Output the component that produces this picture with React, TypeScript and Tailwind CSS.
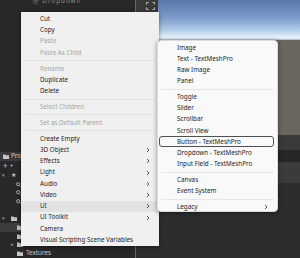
import React from 'react';

type Item = { label: string; disabled?: boolean; sub?: boolean; active?: boolean; outlined?: boolean } | 'sep';

const MAIN_ITEMS: Item[] = [
  { label: 'Cut' },
  { label: 'Copy' },
  { label: 'Paste', disabled: true },
  { label: 'Paste As Child', disabled: true },
  'sep',
  { label: 'Rename', disabled: true },
  { label: 'Duplicate' },
  { label: 'Delete' },
  'sep',
  { label: 'Select Children', disabled: true },
  'sep',
  { label: 'Set as Default Parent', disabled: true },
  'sep',
  { label: 'Create Empty' },
  { label: '3D Object', sub: true },
  { label: 'Effects', sub: true },
  { label: 'Light', sub: true },
  { label: 'Audio', sub: true },
  { label: 'Video', sub: true },
  { label: 'UI', sub: true, active: true },
  { label: 'UI Toolkit', sub: true },
  { label: 'Camera' },
  { label: 'Visual Scripting Scene Variables' },
];

const UI_ITEMS: Item[] = [
  { label: 'Image' },
  { label: 'Text - TextMeshPro' },
  { label: 'Raw Image' },
  { label: 'Panel' },
  'sep',
  { label: 'Toggle' },
  { label: 'Slider' },
  { label: 'Scrollbar' },
  { label: 'Scroll View' },
  { label: 'Button - TextMeshPro', outlined: true },
  { label: 'Dropdown - TextMeshPro' },
  { label: 'Input Field - TextMeshPro' },
  'sep',
  { label: 'Canvas' },
  { label: 'Event System' },
  'sep',
  { label: 'Legacy', sub: true },
];

function Chevron() {
  return (
    <svg width="4" height="6" viewBox="0 0 4 6" className="shrink-0">
      <path d="M1 1 L3 3 L1 5" fill="none" stroke="#4a4a4a" strokeWidth="0.9" />
    </svg>
  );
}

function Folder() {
  return (
    <svg width="6" height="5" viewBox="0 0 6 5" className="shrink-0">
      <path d="M0 0.5 H2.3 L3 1.2 H6 V5 H0 Z" fill="#c4c4c4" />
    </svg>
  );
}

function Lens() {
  return (
    <svg width="5" height="5" viewBox="0 0 5 5" className="shrink-0">
      <circle cx="2.2" cy="2.2" r="1.6" fill="none" stroke="#bdbdbd" strokeWidth="0.9" />
      <path d="M3.4 3.4 L4.7 4.7" stroke="#bdbdbd" strokeWidth="0.9" />
    </svg>
  );
}

function MainMenu() {
  return (
    <div className="absolute left-[21px] top-[12px] w-[138px] h-[234px] bg-[#f0f0f0] pt-[1.5px] shadow-[0_1px_4px_rgba(0,0,0,0.45)]">
      {MAIN_ITEMS.map((it, i) =>
        it === 'sep' ? (
          <div key={i} className="h-[4.6px] flex items-center px-[4px]">
            <div className="h-px w-full bg-[#e2e2e2]" />
          </div>
        ) : (
          <div
            key={i}
            className={`h-[11.25px] flex items-center justify-between pl-[19px] pr-[9px] ${
              it.active ? 'bg-[#e2e2e2]' : ''
            }`}
          >
            <span
              className={`text-[6.3px] leading-none whitespace-nowrap ${
                it.disabled ? 'text-[#a6a6a6]' : 'text-[#1e1e1e]'
              }`}
            >
              {it.label}
            </span>
            {it.sub && <Chevron />}
          </div>
        ),
      )}
    </div>
  );
}

function UiMenu() {
  return (
    <div className="absolute left-[157px] top-[40px] w-[121px] h-[172px] bg-[#f9f9f9] rounded-[4px] pt-[1.5px] border border-[#dcdcdc] shadow-[0_1px_5px_rgba(0,0,0,0.4)]">
      {UI_ITEMS.map((it, i) =>
        it === 'sep' ? (
          <div key={i} className="h-[5px] flex items-center px-[3px]">
            <div className="h-px w-full bg-[#e6e6e6]" />
          </div>
        ) : (
          <div key={i} className="h-[11.1px] pl-[1px] pr-[3px]">
            <div
              className={`h-full flex items-center justify-between pl-[17px] pr-[5px] rounded-[3px] ${
                it.outlined ? 'border border-[#505050]' : 'border border-transparent'
              }`}
            >
              <span className="text-[6.3px] leading-none whitespace-nowrap text-[#1e1e1e]">{it.label}</span>
              {it.sub && <Chevron />}
            </div>
          </div>
        ),
      )}
    </div>
  );
}

// tree rows sit mostly under the menu, only icons at the left edge show
function TreeRow({ arrow, icon, selected }: { arrow?: string; icon: React.ReactNode; selected?: boolean }) {
  return (
    <div className={`h-[8.7px] flex items-center pl-[2px] ${selected ? 'bg-[#3c3c3c]' : ''}`}>
      <span className="w-[9px] text-[5px] leading-none text-[#9a9a9a]">{arrow ?? ''}</span>
      <div className="w-[9px] flex items-center">{icon}</div>
    </div>
  );
}

export default function App() {
  return (
    <div className="relative w-[300px] h-[258px] overflow-hidden bg-[#282828] flex font-['Noto_Sans',sans-serif]">
      {/* hierarchy + project panel */}
      <div className="w-[135px] flex flex-col">
        <div className="h-[12px] overflow-hidden pl-[33px] pt-[1px]">
          <div className="-mt-[3px] text-[6.3px] leading-none text-[#8a8a8a] tracking-[1px]">@ Dropdown</div>
        </div>
        <div className="h-[140px]" />
        <div className="h-[9px] flex">
          <div className="w-[40px] bg-[#3a3a3a] flex items-center gap-[2px] pl-[3px]">
            <Folder />
            <span className="text-[6.3px] leading-none text-[#c8c8c8]">Project</span>
          </div>
        </div>
        <div className="h-[10px] flex items-center gap-[2px] pl-[3px] text-[#c0c0c0]">
          <span className="text-[8px] leading-none">+</span>
          <span className="text-[4px] leading-none">▼</span>
        </div>
        <TreeRow arrow="▾" icon={<span className="text-[6px] leading-none text-[#c8c8c8]">★</span>} />
        <div className="h-[8.7px] flex items-center pl-[16px]"><Lens /></div>
        <div className="h-[8.7px] flex items-center pl-[16px]"><Lens /></div>
        <div className="h-[8.7px] flex items-center pl-[16px]"><Lens /></div>
        <div className="h-[8.7px]" />
        <TreeRow arrow="▾" icon={<Folder />} />
        <div className="h-[8.7px] flex items-center pl-[17px] bg-[#3c3c3c]"><Folder /></div>
        <div className="h-[8.7px] flex items-center pl-[17px]"><Folder /></div>
        <div className="h-[8.7px] flex items-center pl-[11px] gap-[1px]">
          <span className="w-[5px] text-[5px] leading-none text-[#9a9a9a]">▸</span>
          <Folder />
        </div>
        <div className="h-[8.7px] flex items-center pl-[17px] gap-[3px]">
          <Folder />
          <span className="text-[6.3px] leading-none text-[#c8c8c8]">Textures</span>
        </div>
      </div>

      {/* scene toolbar strip */}
      <div className="w-[23px] flex flex-col border-l border-[#4d6a8e]">
        <div className="h-[12px] bg-[#3a3a3a] flex items-center justify-center pl-[6px]">
          <svg width="9" height="8" viewBox="0 0 9 8">
            <path
              d="M0.5 2.5 V0.5 H2.5 M6.5 0.5 H8.5 V2.5 M8.5 5.5 V7.5 H6.5 M2.5 7.5 H0.5 V5.5"
              fill="none"
              stroke="#bdbdbd"
              strokeWidth="1"
            />
          </svg>
        </div>
        <div className="flex-1 bg-[#2d2d2d]" />
      </div>

      {/* scene view */}
      <div className="flex-1 flex flex-col">
        <div className="h-[40px] bg-[linear-gradient(to_bottom,#5876a6_0%,#7d9ccb_45%,#b6d0ea_78%,#eef6fb_95%,#9fb3c4_100%)]" />
        <div className="h-[95px] bg-[#6b6560]" />
        <div className="h-[15px] bg-[#3a3a3a]" />
        <div className="h-[12px] bg-[#262626]" />
        <div className="h-[21px] bg-[#3b3b3b]" />
        <div className="flex-1 bg-[#2d2d2d]" />
      </div>

      <MainMenu />
      <UiMenu />
    </div>
  );
}
